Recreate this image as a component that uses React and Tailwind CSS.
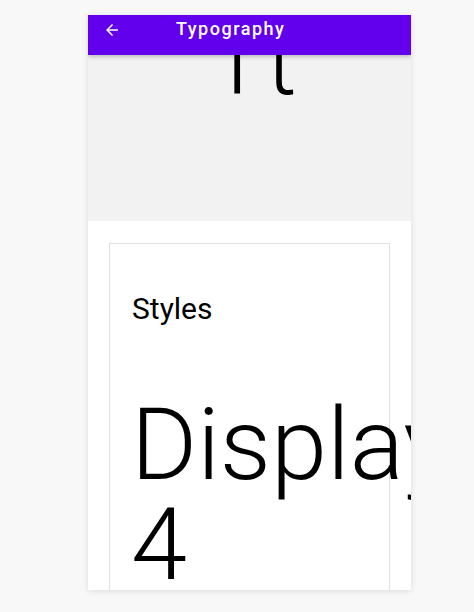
const ArrowBack = () => (
  <svg width="18" height="18" viewBox="0 0 24 24" fill="white">
    <path d="M20 11H7.83l5.59-5.59L12 4l-8 8 8 8 1.41-1.41L7.83 13H20v-2z" />
  </svg>
);

const App = () => {
  return (
    <div className="min-h-screen w-full bg-[#f8f8f8] pt-[15px] pl-[88px] font-['Roboto',sans-serif]">
      <div className="relative w-[323px] h-[575px] bg-white overflow-hidden shadow-[0_1px_6px_rgba(0,0,0,0.12)] flex flex-col">
        {/* App bar */}
        <div className="relative z-10 h-[40px] shrink-0 bg-[#6200ee] shadow-[0_2px_4px_rgba(0,0,0,0.22)] flex items-start pt-[2px]">
          <div className="w-[48px] h-[24px] flex items-center justify-center pt-[1px]">
            <ArrowBack />
          </div>
          <h1 className="ml-[40px] h-[24px] leading-[24px] text-[18px] font-medium tracking-[1.5px] text-white">
            Typography
          </h1>
        </div>

        {/* Hero */}
        <div className="h-[166px] shrink-0 bg-[#f2f2f2] overflow-hidden flex justify-center">
          <div className="mt-[-42px] ml-[6px] text-[96px] leading-[96px] font-light text-black">
            Tt
          </div>
        </div>

        {/* Styles card */}
        <div className="flex-1 px-[21px] pt-[22px]">
          <div className="h-[400px] border border-[#e0e0e0] pl-[22px]">
            <h2 className="mt-[47px] text-[30px] leading-[36px] font-normal text-black">
              Styles
            </h2>
            <p className="mt-[68px] -ml-[1px] text-[101px] leading-[100px] font-light text-black">
              Display 4
            </p>
          </div>
        </div>
      </div>
    </div>
  );
};

export default App;
